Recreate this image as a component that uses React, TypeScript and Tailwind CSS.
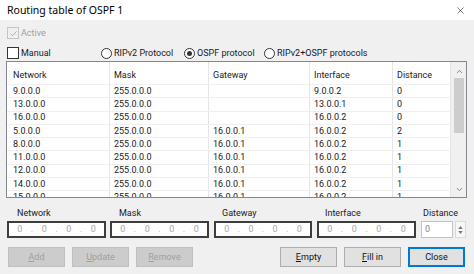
import { X, ChevronUp, ChevronDown } from "lucide-react";

const rows = [
  ["9.0.0.0", "255.0.0.0", "", "9.0.0.2", "0"],
  ["13.0.0.0", "255.0.0.0", "", "13.0.0.1", "0"],
  ["16.0.0.0", "255.0.0.0", "", "16.0.0.2", "0"],
  ["5.0.0.0", "255.0.0.0", "16.0.0.1", "16.0.0.2", "2"],
  ["8.0.0.0", "255.0.0.0", "16.0.0.1", "16.0.0.2", "1"],
  ["11.0.0.0", "255.0.0.0", "16.0.0.1", "16.0.0.2", "1"],
  ["12.0.0.0", "255.0.0.0", "16.0.0.1", "16.0.0.2", "1"],
  ["14.0.0.0", "255.0.0.0", "16.0.0.1", "16.0.0.2", "1"],
  ["15.0.0.0", "255.0.0.0", "16.0.0.1", "16.0.0.2", "1"],
];

const cols = [
  { label: "Network", w: "w-[103px] pl-[6px]" },
  { label: "Mask", w: "w-[99px] pl-[4px]" },
  { label: "Gateway", w: "w-[101px] pl-[4px]" },
  { label: "Interface", w: "w-[83px] pl-[4px]" },
  { label: "Distance", w: "w-[58px] pl-[4px]" },
];

function Radio({ label, checked }: { label: string; checked?: boolean }) {
  return (
    <div className="flex items-center gap-[2px]">
      <span className="w-[11px] h-[11px] rounded-full border border-[#333] bg-white flex items-center justify-center">
        {checked && <span className="w-[5px] h-[5px] rounded-full bg-[#333]" />}
      </span>
      <span>{label}</span>
    </div>
  );
}

function IpBox({ w }: { w: string }) {
  return (
    <div className={`${w} h-[17px] border-2 border-[#3d3d3d] bg-white flex items-center justify-around px-[4px] text-[#a8a8a8]`}>
      <span>0</span>
      <span>.</span>
      <span>0</span>
      <span>.</span>
      <span>0</span>
      <span>.</span>
      <span>0</span>
    </div>
  );
}

function Btn({ u, rest, kind }: { u: string; rest: string; kind: "off" | "on" | "def" }) {
  const cls =
    kind === "off"
      ? "bg-[#cccccc] border border-[#bfbfbf] text-[#a0a0a0]"
      : kind === "def"
      ? "bg-[#e1e1e1] border-2 border-[#0078d7] text-[#111]"
      : "bg-[#e1e1e1] border border-[#adadad] text-[#111]";
  return (
    <div className={`w-[57px] h-[20px] flex items-center justify-center ${cls}`}>
      <span>
        {u && <span className="underline underline-offset-1">{u}</span>}
        {rest}
      </span>
    </div>
  );
}

export default function App() {
  return (
    <div className="w-[474px] h-[274px] overflow-hidden bg-[#f0f0f0] text-[9px] text-[#1a1a1a] font-['Roboto',sans-serif] leading-none">
      {/* Title bar */}
      <div className="h-[20px] bg-white flex items-center justify-between pl-[7px] pr-[8px]">
        <span className="text-[10.5px] text-black font-['Noto_Sans',sans-serif]">Routing table of OSPF 1</span>
        <X className="w-[11px] h-[11px] text-[#222]" strokeWidth={1.3} />
      </div>

      <div className="px-[6px]">
        {/* Active */}
        <div className="mt-[7px] h-[12px] flex items-center gap-[2px] pl-[1px] text-[#a0a0a0]">
          <span className="w-[12px] h-[12px] border border-[#c4c4c4] flex items-center justify-center">
            <svg viewBox="0 0 10 10" className="w-[9px] h-[9px]">
              <path d="M1.5 5.2 L4 7.5 L8.5 2.5" fill="none" stroke="#b0b0b0" strokeWidth="1.1" />
            </svg>
          </span>
          <span>Active</span>
        </div>

        {/* Manual + protocols */}
        <div className="mt-[8px] h-[12px] flex items-center pl-[1px]">
          <div className="flex items-center gap-[2px] w-[94px]">
            <span className="w-[12px] h-[12px] border border-[#333] bg-white" />
            <span>Manual</span>
          </div>
          <div className="w-[83px]">
            <Radio label="RIPv2 Protocol" />
          </div>
          <div className="w-[80px]">
            <Radio label="OSPF protocol" checked />
          </div>
          <Radio label="RIPv2+OSPF protocols" />
        </div>

        {/* Table */}
        <div className="mt-[2px] w-[461px] h-[137px] border border-[#828790] bg-white flex overflow-hidden">
          <div className="flex-1 flex flex-col">
            <div className="h-[22px] flex shrink-0">
              {cols.map((c) => (
                <div key={c.label} className={`${c.w} shrink-0 border-r border-[#e5e5e5] flex items-center pt-[4px]`}>
                  {c.label}
                </div>
              ))}
            </div>
            {rows.map((r, i) => (
              <div key={i} className="h-[13.3px] flex shrink-0 border-t border-[#efefef]">
                {r.map((v, j) => (
                  <div key={j} className={`${cols[j].w} shrink-0 border-r border-[#e5e5e5] flex items-center`}>
                    {v}
                  </div>
                ))}
              </div>
            ))}
          </div>
          {/* Scrollbar */}
          <div className="w-[16px] bg-[#f0f0f0] flex flex-col items-center shrink-0">
            <ChevronUp className="w-[9px] h-[9px] mt-[5px] text-[#606060]" strokeWidth={2} />
            <div className="w-[10px] h-[55px] bg-[#cdcdcd] mt-[2px]" />
            <div className="flex-1" />
            <ChevronDown className="w-[9px] h-[9px] mb-[3px] text-[#606060]" strokeWidth={2} />
          </div>
        </div>

        {/* Edit fields */}
        <div className="mt-[11px] flex items-start">
          <div className="flex flex-col ml-[1px]">
            <span className="pl-[10px] h-[12px]">Network</span>
            <IpBox w="w-[99px]" />
          </div>
          <div className="flex flex-col ml-[4px]">
            <span className="pl-[9px] h-[12px]">Mask</span>
            <IpBox w="w-[99px]" />
          </div>
          <div className="flex flex-col ml-[5px]">
            <span className="pl-[8px] h-[12px]">Gateway</span>
            <IpBox w="w-[98px]" />
          </div>
          <div className="flex flex-col ml-[5px]">
            <span className="pl-[8px] h-[12px]">Interface</span>
            <IpBox w="w-[99px]" />
          </div>
          <div className="flex flex-col ml-[5px]">
            <span className="pl-[2px] h-[12px]">Distance</span>
            <div className="flex items-center gap-[2px]">
              <div className="w-[32px] h-[17px] border border-[#c4c4c4] bg-white flex items-center pl-[3px] text-[#8a8a8a]">0</div>
              <div className="w-[11px] h-[17px] border border-[#dadada] bg-[#f7f7f7] flex flex-col items-center justify-center gap-[2px]">
                <svg viewBox="0 0 6 4" className="w-[5px] h-[3px]"><path d="M0 4 L3 0 L6 4 Z" fill="#777" /></svg>
                <svg viewBox="0 0 6 4" className="w-[5px] h-[3px]"><path d="M0 0 L3 4 L6 0 Z" fill="#777" /></svg>
              </div>
            </div>
          </div>
        </div>

        {/* Buttons */}
        <div className="mt-[9px] flex items-center">
          <div className="ml-[2px] flex gap-[7px]">
            <Btn u="A" rest="dd" kind="off" />
            <Btn u="U" rest="pdate" kind="off" />
            <Btn u="R" rest="emove" kind="off" />
          </div>
          <div className="ml-auto mr-[3px] flex gap-[7px]">
            <Btn u="E" rest="mpty" kind="on" />
            <Btn u="F" rest="ill in" kind="on" />
            <Btn u="" rest="Close" kind="def" />
          </div>
        </div>
      </div>
    </div>
  );
}
